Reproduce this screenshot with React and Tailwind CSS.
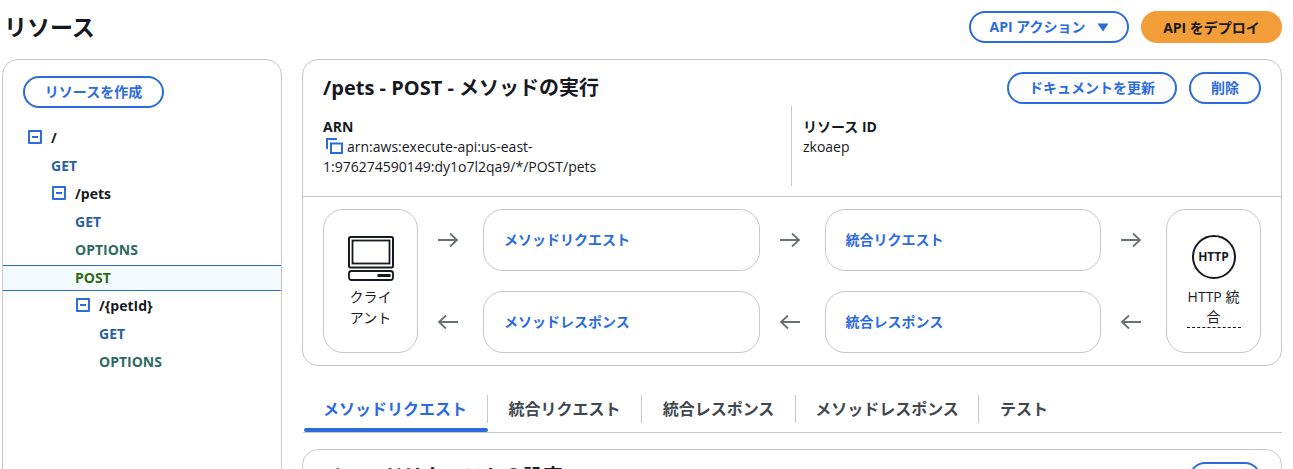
const FONT = 'font-["Open_Sans","Noto_Sans_CJK_JP",sans-serif]';

function Pill({ children, className = "" }) {
  return (
    <button className={`h-8 rounded-full border-2 border-[#2b6bdc] bg-white text-[#2b6bdc] text-[14px] font-bold leading-none flex items-center justify-center ${className}`}>
      {children}
    </button>
  );
}

function Minus() {
  return (
    <span className="w-[14px] h-[14px] border-2 border-[#2b6bdc] flex items-center justify-center rounded-[1px] shrink-0">
      <span className="w-[6px] h-[2px] bg-[#2b6bdc]" />
    </span>
  );
}

function Res({ pad, children }) {
  return (
    <div className={`h-7 flex items-center gap-[9px] ${pad} font-bold text-[14px] text-[#16191f]`}>
      <Minus />
      <span>{children}</span>
    </div>
  );
}

function Method({ pad, color, children }) {
  return <div className={`h-7 flex items-center ${pad} ${color} font-bold text-[14px]`}>{children}</div>;
}

function Arrow({ left }) {
  return (
    <div className="flex items-center justify-center pr-[5px]">
      <svg width="22" height="16" viewBox="0 0 22 16" fill="none" stroke="#687078" strokeWidth="1.8" className={left ? "rotate-180" : ""}>
        <path d="M1 8H20M13 1.5L20 8L13 14.5" />
      </svg>
    </div>
  );
}

function FlowBox({ children }) {
  return (
    <div className="border border-[#c6c6cd] rounded-[20px] pl-5 pt-[20px] text-[#2b6bdc] text-[14px] font-bold leading-5">
      {children}
    </div>
  );
}

function Tab({ children, active, last, w }) {
  return (
    <div className={`relative h-[37px] ${w} ${active ? "text-[#2b6bdc]" : "text-[#414750]"} text-[16px] font-bold`}>
      <div className={`h-7 flex items-center ${last ? "pl-[21px]" : "justify-center border-r border-[#c6c6cd]"}`}>{children}</div>
      {active && <div className="absolute left-[1px] right-0 bottom-0 h-1 rounded-sm bg-[#2b6bdc]" />}
    </div>
  );
}

export default function App() {
  return (
    <div className={`${FONT} w-[1293px] h-[469px] overflow-hidden bg-white text-[#16191f] flex flex-col`}>
      <div className="h-[59px] flex items-start justify-between pl-[4px] pr-[11px] pt-[11px] shrink-0">
        <h1 className="text-[23px] font-bold leading-8">リソース</h1>
        <div className="flex gap-3">
          <Pill className="w-[160px] gap-[10px]">
            API アクション
            <svg width="12" height="9" viewBox="0 0 12 9" className="ml-[1px]"><path d="M0.5 0.5H11.5L6 8.5Z" fill="#2b6bdc" /></svg>
          </Pill>
          <button className="w-[141px] h-8 rounded-full bg-[#f29d38] text-[#16191f] text-[14px] font-bold">API をデプロイ</button>
        </div>
      </div>

      <div className="flex pl-[2px] pr-[11px] gap-5 flex-1 min-h-0">
        <aside className="w-[280px] shrink-0 border border-[#c6c6cd] rounded-t-[16px] pt-4 h-[440px]">
          <Pill className="w-[141px] ml-5">リソースを作成</Pill>
          <div className="mt-[15px]">
            <Res pad="pl-[25px]">/</Res>
            <Method pad="pl-[48px]" color="text-[#2a60a6]">GET</Method>
            <Res pad="pl-[49px]">/pets</Res>
            <Method pad="pl-[72px]" color="text-[#2a60a6]">GET</Method>
            <Method pad="pl-[72px]" color="text-[#2e6b5f]">OPTIONS</Method>
            <div className="h-[26px] mt-[2px] flex items-center pl-[72px] pb-px bg-[#f2fafe] border-y border-[#2b6bdc] text-[#2f6b17] font-bold text-[14px]">POST</div>
            <Res pad="pl-[73px]">/{"{petId}"}</Res>
            <Method pad="pl-[96px]" color="text-[#2a60a6]">GET</Method>
            <Method pad="pl-[96px]" color="text-[#2e6b5f]">OPTIONS</Method>
          </div>
        </aside>

        <main className="flex-1 min-w-0">
          <section className="h-[307px] border border-[#c6c6cd] rounded-[16px]">
            <div className="h-[137px] border-b border-[#c6c6cd] px-5 pt-3 ">
              <div className="flex justify-between items-start">
                <h2 className="text-[20px] font-bold leading-8">/pets - POST - メソッドの実行</h2>
                <div className="flex gap-3">
                  <Pill className="w-[170px]">ドキュメントを更新</Pill>
                  <Pill className="w-[72px]">削除</Pill>
                </div>
              </div>
              <div className="flex mt-[2px] h-[80px] text-[14px] leading-5">
                <div className="w-[468px] pt-[11px]">
                  <div className="font-bold">ARN</div>
                  <div className="w-[440px]">
                    <svg width="17" height="16" viewBox="0 0 17 16" fill="none" stroke="#2b6bdc" strokeWidth="2" className="inline-block align-[-2px] ml-[3px] mr-[4px]">
                      <path d="M1 11V1H11" />
                      <rect x="5" y="5.5" width="11" height="9.5" />
                    </svg>
                    arn:aws:execute-api:us-east-1:976274590149:dy1o7l2qa9/*/POST/pets
                  </div>
                </div>
                <div className="border-l border-[#c6c6cd] pl-[11px] pt-[11px]">
                  <div className="font-bold">リソース ID</div>
                  <div>zkoaep</div>
                </div>
              </div>
            </div>

            <div className="px-5 pt-3 grid grid-cols-[95px_65px_1fr_65px_1fr_65px_95px] grid-rows-[62px_62px] gap-y-5">
              <div className="row-span-2 border border-[#c6c6cd] rounded-[20px] flex flex-col items-center pt-[26px] text-[14px] leading-[21px] text-center">
                <svg width="46" height="45" viewBox="0 0 46 45" fill="none" stroke="#16191f">
                  <rect x="1" y="1" width="44" height="30.5" rx="1.5" strokeWidth="2" />
                  <rect x="4.5" y="4.5" width="37" height="23" strokeWidth="1.8" />
                  <rect x="1" y="35" width="44" height="9" rx="2.5" strokeWidth="1.8" />
                  <rect x="29.5" y="38" width="13" height="3" fill="#16191f" stroke="none" />
                </svg>
                <div className="mt-[5px] w-[46px]">クライアント</div>
              </div>
              <Arrow />
              <FlowBox>メソッドリクエスト</FlowBox>
              <Arrow />
              <FlowBox>統合リクエスト</FlowBox>
              <Arrow />
              <div className="row-span-2 col-start-7 row-start-1 border border-[#c6c6cd] rounded-[20px] flex flex-col items-center pt-[25px] text-[14px] leading-5 text-center">
                <div className="w-[44px] h-[44px] rounded-full border-2 border-[#16191f] flex items-center justify-center text-[12px] font-bold">HTTP</div>
                <div className="mt-[8px] w-[54px] border-b border-dashed border-[#16191f]">HTTP 統合</div>
              </div>
              <Arrow left />
              <FlowBox>メソッドレスポンス</FlowBox>
              <Arrow left />
              <FlowBox>統合レスポンス</FlowBox>
              <Arrow left />
            </div>
          </section>

          <nav className="mt-[29px] ml-px border-b border-[#c6c6cd] flex h-[38px]">
            <Tab active w="w-[185px]">メソッドリクエスト</Tab>
            <Tab w="w-[154px]">統合リクエスト</Tab>
            <Tab w="w-[154px]">統合レスポンス</Tab>
            <Tab w="w-[183px]">メソッドレスポンス</Tab>
            <Tab last w="w-[110px]">テスト</Tab>
          </nav>

          <section className="mt-4 h-[100px] border border-[#c6c6cd] rounded-[16px] px-5 flex justify-between items-start">
            <h2 className="text-[20px] font-bold leading-8 pt-[11px]">メソッドリクエストの設定</h2>
            <Pill className="w-[72px] mt-3">編集</Pill>
          </section>
        </main>
      </div>
    </div>
  );
}
